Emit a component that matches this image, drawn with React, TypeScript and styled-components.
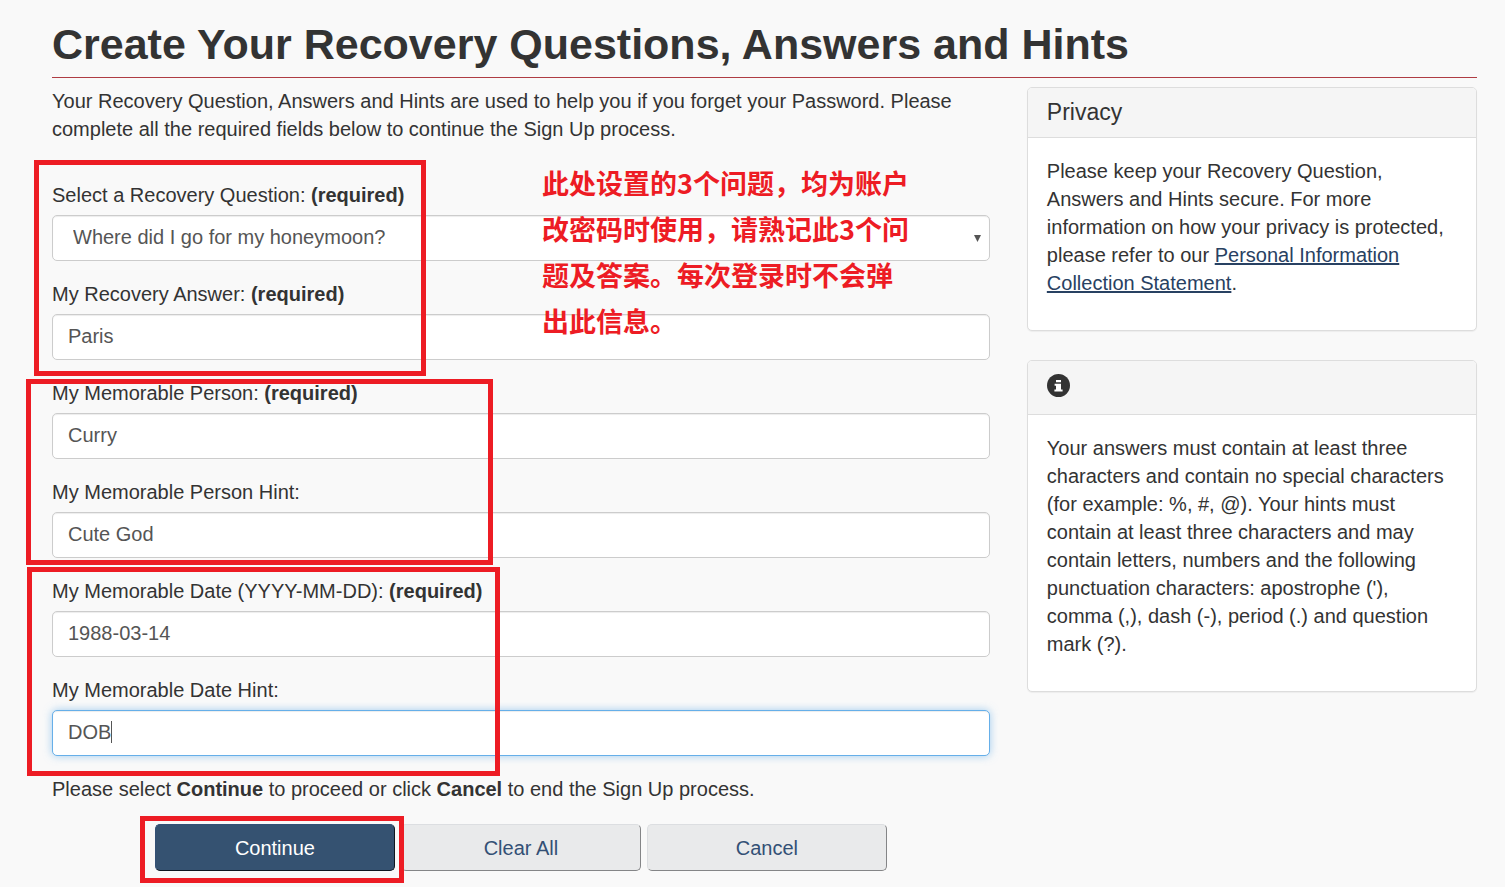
import React, { useState } from "react";
import styled, { createGlobalStyle, css } from "styled-components";

const GlobalStyle = createGlobalStyle`
  *, *::before, *::after { box-sizing: border-box; }
  body {
    margin: 0;
    background: #f9f9f9;
    color: #333;
    font-family: "Liberation Sans", Arial, Helvetica, sans-serif;
    font-size: 20px;
    line-height: 28px;
  }
`;

const Page = styled.div`
  padding: 16px 28px 16px 52px;
`;

const Title = styled.h1`
  margin: 0;
  padding-bottom: 5px;
  border-bottom: 1px solid #af3c43;
  font-size: 43px;
  line-height: 56px;
  font-weight: 700;
`;

const Columns = styled.div`
  display: grid;
  grid-template-columns: 25fr 12fr;
  column-gap: 37px;
  align-items: start;
  margin-top: 9px;
`;

const Intro = styled.p`
  margin: 0 0 38px;
`;

const Group = styled.div`
  position: relative;
  display: grid;
  gap: 19px;
  margin-bottom: 19px;
`;

const Field = styled.div`
  display: grid;
  gap: 6px;
`;

const ControlBox = styled.div`
  position: relative;
`;

const control = css`
  display: block;
  width: 100%;
  height: 46px;
  margin: 0;
  border: 1px solid #ccc;
  border-radius: 5px;
  background: #fff;
  box-shadow: inset 0 1px 1px rgba(0, 0, 0, 0.075);
  color: #555;
  font: inherit;
  outline: none;
`;

const activeControl = css`
  border-color: #66afe9;
  box-shadow: inset 0 1px 1px rgba(0, 0, 0, 0.075), 0 0 8px rgba(102, 175, 233, 0.6);
`;

const TextInput = styled.input<{ $active?: boolean }>`
  ${control}
  padding: 6px 15px 8px;
  ${(p) => p.$active && activeControl}
  &:focus { ${activeControl} }
`;

const Select = styled.select`
  ${control}
  appearance: none;
  padding: 6px 30px 8px 20px;
  &:focus { ${activeControl} }
`;

const Arrow = styled.svg`
  position: absolute;
  right: 9px;
  top: 20px;
  width: 7px;
  height: 7px;
  pointer-events: none;
`;

const Caret = styled.span`
  position: absolute;
  left: 59px;
  top: 11px;
  width: 1px;
  height: 22px;
  background: #555;
`;

const Highlight = styled.div<{ $x: number; $y: number; $w: number; $h: number }>`
  position: absolute;
  left: ${(p) => p.$x}px;
  top: ${(p) => p.$y}px;
  width: ${(p) => p.$w}px;
  height: ${(p) => p.$h}px;
  border: 5px solid #ed1c24;
  pointer-events: none;
  z-index: 1;
`;

const Note = styled.div`
  position: absolute;
  left: 490px;
  top: -21px;
  color: #ed1c24;
  font-family: "Noto Sans CJK SC", sans-serif;
  font-size: 27px;
  line-height: 46px;
  font-weight: 700;
  white-space: nowrap;
  pointer-events: none;
  z-index: 1;
`;

const Closing = styled.p`
  margin: 0 0 21px;
`;

const Actions = styled.div`
  display: flex;
  justify-content: center;
  gap: 6px;
`;

const ActionSlot = styled.div`
  position: relative;
`;

const Button = styled.button<{ $primary?: boolean }>`
  width: 240px;
  height: 47px;
  padding: 0;
  border: 1px solid;
  border-color: ${(p) => (p.$primary ? "#335075 #0e1620 #0e1620 #335075" : "#dcdee1 #848587 #848587 #dcdee1")};
  border-radius: 5px;
  background: ${(p) => (p.$primary ? "#355271" : "#e9eaeb")};
  color: ${(p) => (p.$primary ? "#fff" : "#335075")};
  font: inherit;
  cursor: pointer;
`;

const Sidebar = styled.aside`
  display: grid;
  gap: 29px;
`;

const Panel = styled.section`
  border: 1px solid #ddd;
  border-radius: 5px;
  background: #fff;
  box-shadow: 0 1px 1px rgba(0, 0, 0, 0.05);
  overflow: hidden;
`;

const PanelHeader = styled.header`
  padding: 12px 19px;
  border-bottom: 1px solid #ddd;
  background: #f5f5f5;
`;

const PanelTitle = styled.h2`
  margin: 0;
  font-size: 23px;
  line-height: 25px;
  font-weight: 400;
`;

const InfoIcon = styled.svg`
  display: block;
  width: 23px;
  height: 23px;
  margin: 1px 0 5px;
`;

const PanelBody = styled.div`
  padding: 19px 19px 33px;
`;

const PanelText = styled.p`
  margin: 0;
`;

const Link = styled.a`
  color: #284162;
`;

type FieldProps = { id: string; label: string; required?: boolean; children: React.ReactNode };

function FormField({ id, label, required, children }: FieldProps) {
  return (
    <Field>
      <label htmlFor={id}>
        {label}
        {required && <strong> (required)</strong>}
      </label>
      <ControlBox>{children}</ControlBox>
    </Field>
  );
}

const initial = { answer: "Paris", person: "Curry", personHint: "Cute God", date: "1988-03-14", dateHint: "DOB" };
const blank = { answer: "", person: "", personHint: "", date: "", dateHint: "" };

export default function App() {
  const [values, setValues] = useState(initial);
  const bind = (key: keyof typeof initial) => ({
    id: key,
    value: values[key],
    onChange: (e: React.ChangeEvent<HTMLInputElement>) => setValues({ ...values, [key]: e.target.value }),
  });

  return (
    <>
      <GlobalStyle />
      <Page>
        <Title>Create Your Recovery Questions, Answers and Hints</Title>
        <Columns>
          <main>
            <Intro>
              Your Recovery Question, Answers and Hints are used to help you if you forget your Password. Please
              complete all the required fields below to continue the Sign Up process.
            </Intro>
            <form onSubmit={(e) => e.preventDefault()}>
              <Group>
                <FormField id="question" label="Select a Recovery Question:" required>
                  <Select id="question">
                    <option>Where did I go for my honeymoon?</option>
                  </Select>
                  <Arrow viewBox="0 0 7 7" aria-hidden="true">
                    <path d="M0 0h7L3.5 7z" fill="#555" />
                  </Arrow>
                </FormField>
                <FormField id="answer" label="My Recovery Answer:" required>
                  <TextInput type="text" {...bind("answer")} />
                </FormField>
                <Highlight $x={-18} $y={-21} $w={392} $h={216} />
                <Note lang="zh-CN">
                  此处设置的3个问题，均为账户
                  <br />
                  改密码时使用，请熟记此3个问
                  <br />
                  题及答案。每次登录时不会弹
                  <br />
                  出此信息。
                </Note>
              </Group>
              <Group>
                <FormField id="person" label="My Memorable Person:" required>
                  <TextInput type="text" {...bind("person")} />
                </FormField>
                <FormField id="personHint" label="My Memorable Person Hint:">
                  <TextInput type="text" {...bind("personHint")} />
                </FormField>
                <Highlight $x={-26} $y={0} $w={467} $h={186} />
              </Group>
              <Group>
                <FormField id="date" label="My Memorable Date (YYYY-MM-DD):" required>
                  <TextInput type="text" {...bind("date")} />
                </FormField>
                <FormField id="dateHint" label="My Memorable Date Hint:">
                  <TextInput type="text" $active {...bind("dateHint")} />
                  <Caret />
                </FormField>
                <Highlight $x={-25} $y={-10} $w={473} $h={209} />
              </Group>
              <Closing>
                Please select <strong>Continue</strong> to proceed or click <strong>Cancel</strong> to end the Sign Up
                process.
              </Closing>
              <Actions>
                <ActionSlot>
                  <Button type="submit" $primary>
                    Continue
                  </Button>
                  <Highlight $x={-15} $y={-8} $w={264} $h={67} />
                </ActionSlot>
                <Button type="button" onClick={() => setValues(blank)}>
                  Clear All
                </Button>
                <Button type="button">Cancel</Button>
              </Actions>
            </form>
          </main>
          <Sidebar>
            <Panel>
              <PanelHeader>
                <PanelTitle>Privacy</PanelTitle>
              </PanelHeader>
              <PanelBody>
                <PanelText>
                  Please keep your Recovery Question, Answers and Hints secure. For more information on how your
                  privacy is protected, please refer to our <Link href="#">Personal Information Collection Statement</Link>.
                </PanelText>
              </PanelBody>
            </Panel>
            <Panel>
              <PanelHeader>
                <InfoIcon viewBox="0 0 23 23" role="img" aria-label="Information">
                  <circle cx="11.5" cy="11.5" r="11.5" fill="#333" />
                  <path d="M9 6h5v2.2H9zM7.6 9.8H14v5.6h1.6v2H7.4v-2H9v-3.6H7.6z" fill="#fff" />
                </InfoIcon>
              </PanelHeader>
              <PanelBody>
                <PanelText>
                  Your answers must contain at least three characters and contain no special characters (for example:
                  %, #, @). Your hints must contain at least three characters and may contain letters, numbers and the
                  following punctuation characters: apostrophe ('), comma (,), dash (-), period (.) and question mark
                  (?).
                </PanelText>
              </PanelBody>
            </Panel>
          </Sidebar>
        </Columns>
      </Page>
    </>
  );
}
